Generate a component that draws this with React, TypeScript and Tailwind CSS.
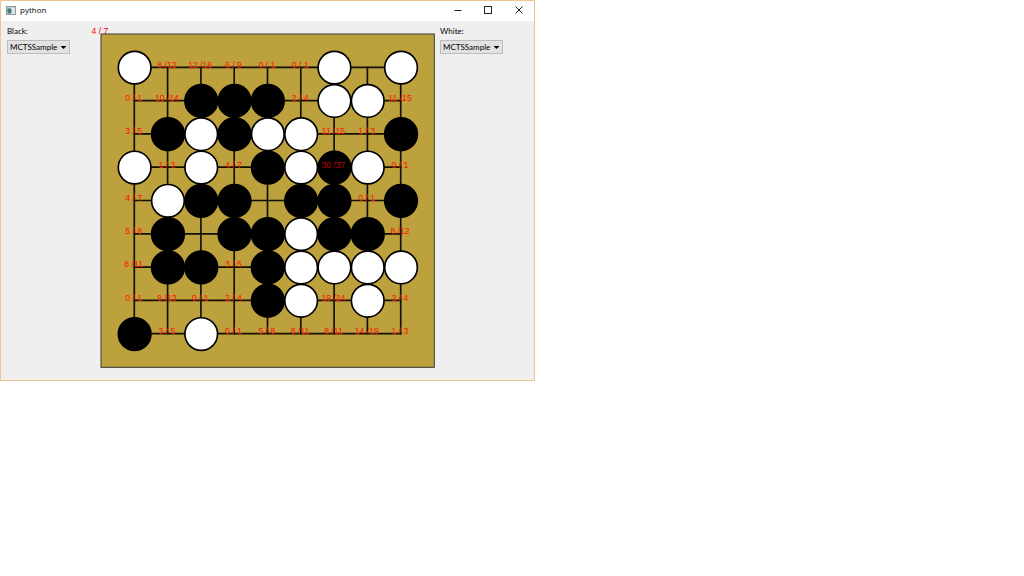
import { useState } from "react";

type Label = { row: number; col: number; text: string };

// B = black stone, W = white stone, . = empty point
const rows: string[] = [
  "W.....W.W",
  "..BBB.WW.",
  ".BWBWW..B",
  "W.W.BWBW.",
  ".WBB.BB.B",
  ".B.BBWBB.",
  ".BB.BWWWW",
  "....BW.W.",
  "B.W......",
];

// wins / visits for every explored move
const labels: Label[] = [
  { row: 0, col: 1, text: "8 /12" },
  { row: 0, col: 2, text: "12 /16" },
  { row: 0, col: 3, text: "6 / 9" },
  { row: 0, col: 4, text: "0 / 1" },
  { row: 0, col: 5, text: "0 / 1" },
  { row: 1, col: 0, text: "0 / 1" },
  { row: 1, col: 1, text: "10 /14" },
  { row: 1, col: 5, text: "2 / 4" },
  { row: 1, col: 8, text: "11 /15" },
  { row: 2, col: 0, text: "3 / 5" },
  { row: 2, col: 6, text: "11 /15" },
  { row: 2, col: 7, text: "1 / 3" },
  { row: 3, col: 1, text: "1 / 3" },
  { row: 3, col: 3, text: "4 / 7" },
  { row: 3, col: 6, text: "30 /37" },
  { row: 3, col: 8, text: "0 / 1" },
  { row: 4, col: 0, text: "4 / 7" },
  { row: 4, col: 7, text: "0 / 1" },
  { row: 5, col: 0, text: "5 / 8" },
  { row: 5, col: 8, text: "8 /12" },
  { row: 6, col: 0, text: "8 /11" },
  { row: 6, col: 3, text: "3 / 5" },
  { row: 7, col: 0, text: "0 / 1" },
  { row: 7, col: 1, text: "9 /13" },
  { row: 7, col: 2, text: "0 / 1" },
  { row: 7, col: 3, text: "2 / 4" },
  { row: 7, col: 6, text: "19 /24" },
  { row: 7, col: 8, text: "2 / 4" },
  { row: 8, col: 1, text: "3 / 5" },
  { row: 8, col: 3, text: "0 / 1" },
  { row: 8, col: 4, text: "5 / 8" },
  { row: 8, col: 5, text: "8 /11" },
  { row: 8, col: 6, text: "8 /11" },
  { row: 8, col: 7, text: "14 /19" },
  { row: 8, col: 8, text: "1 / 3" },
];

const at = (index: number) => (index + 1) * 100;

function Board() {
  return (
    <svg
      viewBox="0 0 1000 1000"
      className="block w-[333px] h-[333px] shrink-0 overflow-visible font-['Liberation_Sans',sans-serif] text-[26px]"
      role="img"
      aria-label="Go board"
    >
      <rect x="0" y="0" width="1001" height="1001" fill="#bda13d" stroke="#3a3a30" strokeWidth="3" />
      {rows.map((_, i) => (
        <g key={i} stroke="#120f04" strokeWidth="5" strokeLinecap="square">
          <line x1={100} y1={at(i)} x2={900} y2={at(i)} />
          <line x1={at(i)} y1={100} x2={at(i)} y2={900} />
        </g>
      ))}
      {rows.map((line, row) =>
        line.split("").map((point, col) =>
          point === "." ? null : (
            <circle
              key={`${row}-${col}`}
              cx={at(col) + 1}
              cy={at(row) + 1}
              r="49"
              fill={point === "W" ? "#fff" : "#000"}
              stroke="#000"
              strokeWidth="5"
            />
          )
        )
      )}
      {/* Pass move sits off the board */}
      <text x="-3" y="0" textAnchor="middle" fill="#ff0000">
        4 / 7
      </text>
      {labels.map(({ row, col, text }) => (
        <text
          key={`${row}-${col}`}
          x={at(col) - 2}
          y={at(row) + 1}
          textAnchor="middle"
          fill={rows[row][col] === "." ? "#ff1000" : "#c00000"}
        >
          {text}
        </text>
      ))}
    </svg>
  );
}

function PlayerPanel({ id, label }: { id: string; label: string }) {
  const [player, setPlayer] = useState("MCTSSample");

  return (
    <div className="w-[100px] px-1.5 pt-[5px] font-['Lato','Liberation_Sans',sans-serif] text-[8px] text-black">
      <label htmlFor={id} className="block h-[14px] leading-[11px]">
        {label}
      </label>
      <div className="relative w-[63px]">
        <select
          id={id}
          value={player}
          onChange={(e) => setPlayer(e.target.value)}
          className="block w-full h-[14px] appearance-none border border-[#bcbcbc] bg-[#e2e2e2] pl-0.5 leading-3 outline-none"
        >
          <option>MCTSSample</option>
          <option>Human</option>
        </select>
        <svg viewBox="0 0 5 3" className="absolute right-1 top-[6px] w-[5px] h-[3px] pointer-events-none">
          <path d="M0 0h5v.5L2.5 3 0 .5z" fill="#000" />
        </svg>
      </div>
    </div>
  );
}

function TitleBar() {
  return (
    <header className="flex items-center h-5 pb-0.5 bg-white">
      <svg viewBox="0 0 20 18" className="ml-[5px] w-2.5 h-[9px]" aria-hidden="true">
        <rect x="1" y="1" width="18" height="16" fill="#f4f4f4" stroke="#8b959b" strokeWidth="2" />
        <rect x="2" y="2" width="16" height="2" fill="#c6d2da" />
        <rect x="3" y="5" width="8" height="10" fill="#35806f" />
        <path d="M3 5h5l-5 7z" fill="#4c72a0" />
        <rect x="13" y="5" width="4" height="10" fill="#d5dadd" />
      </svg>
      <h1 className="ml-1 font-['Open_Sans','Noto_Sans',sans-serif] text-[8px] leading-3 text-black">python</h1>
      <div className="ml-auto flex h-full">
        <button aria-label="Minimize" className="grid place-items-center w-[30px]">
          <svg viewBox="0 0 8 8" className="w-2 h-2">
            <path d="M0.5 4.5h7" stroke="#222" />
          </svg>
        </button>
        <button aria-label="Maximize" className="grid place-items-center w-[30px]">
          <svg viewBox="0 0 8 8" className="w-2 h-2">
            <rect x="0.5" y="0.5" width="7" height="7" fill="none" stroke="#222" />
          </svg>
        </button>
        <button aria-label="Close" className="grid place-items-center w-[31px]">
          <svg viewBox="0 0 8 8" className="w-2 h-2">
            <path d="M0.5 0.5l7 7M7.5 0.5l-7 7" stroke="#222" />
          </svg>
        </button>
      </div>
    </header>
  );
}

export default function App() {
  return (
    <main className="min-h-screen bg-white">
      <div className="w-fit border border-[#eac492] bg-[#efefef]">
        <TitleBar />
        <div className="flex">
          <PlayerPanel id="black-player" label="Black:" />
          <div className="pt-[13px] pb-[13px]">
            <Board />
          </div>
          <PlayerPanel id="white-player" label="White:" />
        </div>
      </div>
    </main>
  );
}
